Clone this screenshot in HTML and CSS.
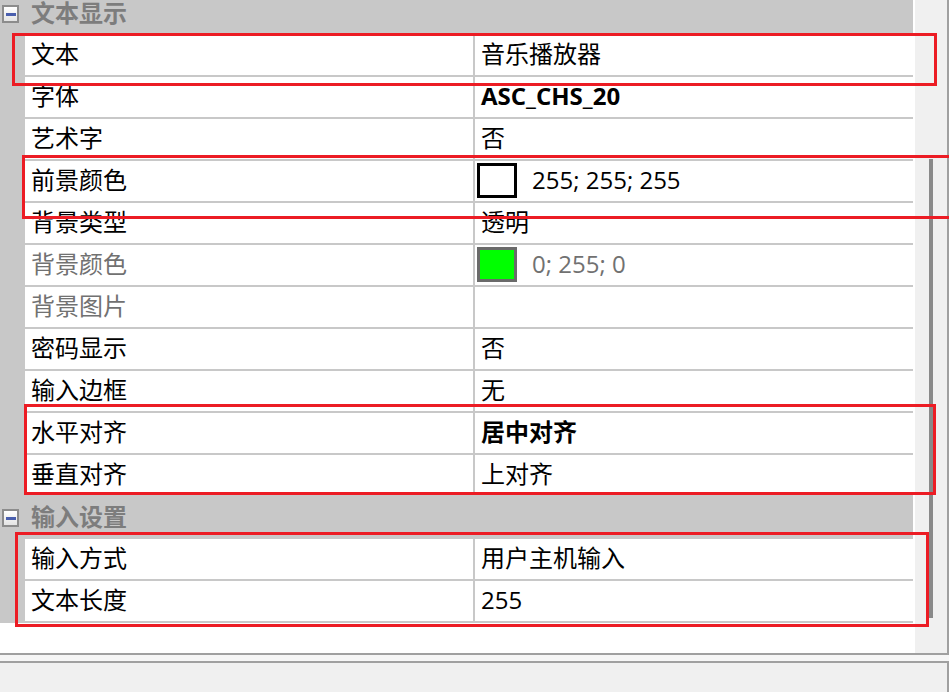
FILE: index.html
```html
<!DOCTYPE html>
<html lang="zh-CN">
<head>
<meta charset="utf-8">
<title>属性</title>
<link rel="stylesheet" href="styles.css">
</head>
<body>
<div class="pane">
  <div class="grid">
    <div class="cat first"><span class="toggle"><span class="minus"></span></span><span class="cat-label">文本显示</span></div>
    <div class="row"><div class="gutter"></div><div class="name">文本</div><div class="value">音乐播放器</div></div>
    <div class="row"><div class="gutter"></div><div class="name">字体</div><div class="value bold">ASC_CHS_20</div></div>
    <div class="row"><div class="gutter"></div><div class="name">艺术字</div><div class="value">否</div></div>
    <div class="row"><div class="gutter"></div><div class="name">前景颜色</div><div class="value swatch-cell"><span class="swatch white"></span><span>255; 255; 255</span></div></div>
    <div class="row"><div class="gutter"></div><div class="name">背景类型</div><div class="value">透明</div></div>
    <div class="row disabled"><div class="gutter"></div><div class="name">背景颜色</div><div class="value swatch-cell"><span class="swatch green"></span><span>0; 255; 0</span></div></div>
    <div class="row disabled"><div class="gutter"></div><div class="name">背景图片</div><div class="value"></div></div>
    <div class="row"><div class="gutter"></div><div class="name">密码显示</div><div class="value">否</div></div>
    <div class="row"><div class="gutter"></div><div class="name">输入边框</div><div class="value">无</div></div>
    <div class="row"><div class="gutter"></div><div class="name">水平对齐</div><div class="value bold">居中对齐</div></div>
    <div class="row"><div class="gutter"></div><div class="name">垂直对齐</div><div class="value">上对齐</div></div>
    <div class="cat"><span class="toggle"><span class="minus"></span></span><span class="cat-label">输入设置</span></div>
    <div class="row"><div class="gutter"></div><div class="name">输入方式</div><div class="value">用户主机输入</div></div>
    <div class="row"><div class="gutter"></div><div class="name">文本长度</div><div class="value">255</div></div>
  </div>
  <div class="scroll"><div class="thumb"></div></div>
</div>
<div class="spacer"></div>
<div class="status"></div>

<div class="mark m1"></div>
<div class="mark m2"></div>
<div class="mark m3"></div>
<div class="mark m4"></div>
</body>
</html>
```
FILE: styles.css
```css
html, body {
  margin: 0;
  padding: 0;
}
body {
  position: relative;
  width: 949px;
  height: 692px;
  overflow: hidden;
  background: #f0f0f0;
  font-family: "Open Sans", "Noto Sans CJK SC", sans-serif;
  font-size: 24px;
  color: #000;
}
.pane {
  display: flex;
  width: 949px;
  height: 655px;
  box-sizing: border-box;
  border-right: 2px solid #a0a0a0;
  border-bottom: 2px solid #a0a0a0;
}
.grid {
  width: 915px;
  height: 653px;
  background: #fff;
  overflow: hidden;
  flex: none;
}
.scroll {
  flex: 1;
  background: #f0f0f0;
  padding-top: 159px;
}
.thumb {
  margin-left: 14px;
  width: 4px;
  height: 459px;
  background: #898989;
}
.cat {
  display: flex;
  align-items: center;
  width: 913px;
  height: 42px;
  background: #c8c8c8;
}
.cat.first {
  margin-top: -7px;
}
.toggle {
  display: flex;
  align-items: center;
  justify-content: center;
  box-sizing: border-box;
  width: 17px;
  height: 18px;
  margin-left: 2px;
  border: 2px solid #8c8c8c;
  background: linear-gradient(#ffffff, #e4e4e4);
}
.minus {
  display: block;
  width: 10px;
  height: 3px;
  background: #4a5fae;
}
.cat-label {
  margin-left: 12px;
  padding-bottom: 3px;
  font-weight: 700;
  color: #7d7d7d;
  line-height: 24px;
}
.row {
  display: flex;
  width: 913px;
  height: 42px;
  box-sizing: border-box;
  border-bottom: 2px solid #c8c8c8;
}
.gutter {
  width: 25px;
  flex: none;
  background: #c8c8c8;
}
.name {
  width: 450px;
  flex: none;
  box-sizing: border-box;
  border-right: 2px solid #c8c8c8;
  padding-left: 6px;
  padding-bottom: 3px;
  display: flex;
  align-items: center;
  line-height: 24px;
  white-space: nowrap;
}
.value {
  flex: 1;
  padding-left: 6px;
  padding-bottom: 3px;
  display: flex;
  align-items: center;
  line-height: 24px;
  white-space: nowrap;
}
.bold {
  font-weight: 700;
}
.disabled .name,
.disabled .value {
  color: #717171;
}
.swatch-cell {
  padding-left: 2px;
  padding-bottom: 2px;
}
.swatch {
  display: block;
  box-sizing: border-box;
  width: 40px;
  height: 35px;
  margin-right: 15px;
}
.swatch.white {
  background: #fff;
  border: 3px solid #000;
}
.swatch.green {
  background: #00ff00;
  border: 3px solid #6a6a6a;
}
.spacer {
  height: 6px;
  background: #f6f6f6;
}
.status {
  height: 31px;
  box-sizing: border-box;
  border-top: 2px solid #a0a0a0;
  border-right: 2px solid #a0a0a0;
  background: #f0f0f0;
}
.mark {
  position: absolute;
  box-sizing: border-box;
  border: 3px solid #ec1c24;
}
.m1 { left: 12px; top: 33px; width: 925px; height: 53px; }
.m2 { left: 22px; top: 155px; width: 940px; height: 64px; }
.m3 { left: 24px; top: 404px; width: 912px; height: 91px; }
.m4 { left: 15px; top: 532px; width: 914px; height: 95px; }
```
